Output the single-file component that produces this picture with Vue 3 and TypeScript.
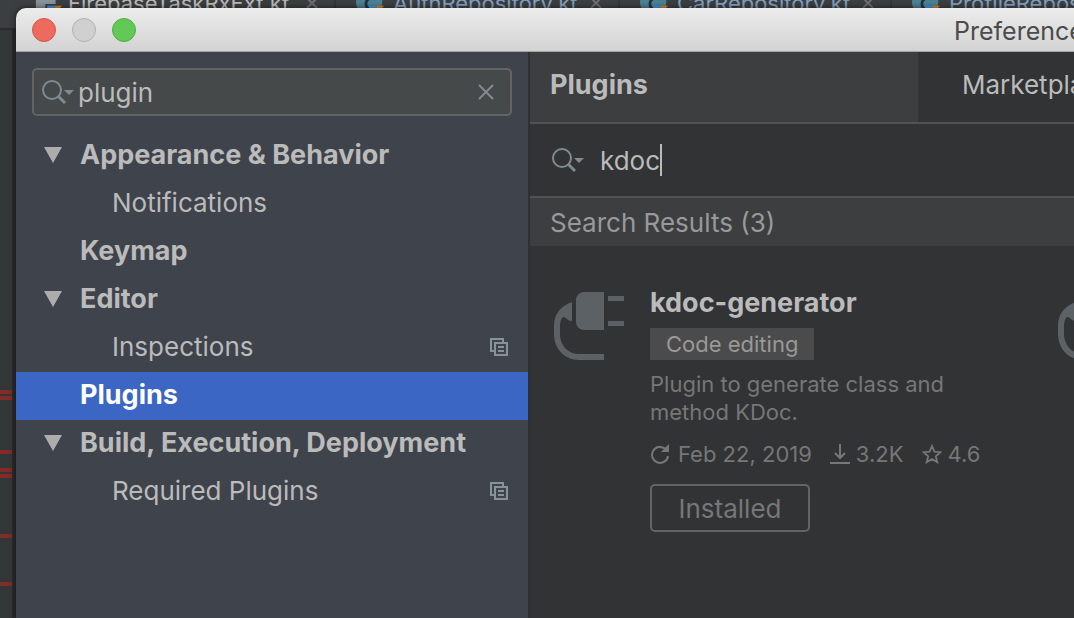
<script setup lang="ts">
import { ref } from 'vue'

interface EditorTab {
  name: string
  kind: 'file' | 'class'
  width: number
}

interface TreeItem {
  label: string
  level: 'group' | 'child'
  arrow?: boolean
  project?: boolean
}

const tabs: EditorTab[] = [
  { name: 'FirebaseTaskRxExt.kt', kind: 'file', width: 322 },
  { name: 'AuthRepository.kt', kind: 'class', width: 284 },
  { name: 'CarRepository.kt', kind: 'class', width: 272 },
  { name: 'ProfileRepository.kt', kind: 'class', width: 320 },
]

const errorMarks: number[] = [360, 366, 420, 438, 444, 504, 552]

const tree: TreeItem[] = [
  { label: 'Appearance & Behavior', level: 'group', arrow: true },
  { label: 'Notifications', level: 'child' },
  { label: 'Keymap', level: 'group' },
  { label: 'Editor', level: 'group', arrow: true },
  { label: 'Inspections', level: 'child', project: true },
  { label: 'Plugins', level: 'group' },
  { label: 'Build, Execution, Deployment', level: 'group', arrow: true },
  { label: 'Required Plugins', level: 'child', project: true },
]

const settingsQuery = ref('plugin')
const pluginQuery = ref('kdoc')
const selected = ref('Plugins')
</script>

<template>
  <div class="desktop">
    <div class="editor-tabs">
      <div v-for="tab in tabs" :key="tab.name" class="editor-tab" :class="tab.kind" :style="{ width: tab.width + 'px' }">
        <svg class="tab-icon" viewBox="0 0 32 32" aria-hidden="true">
          <path v-if="tab.kind === 'file'" fill="#87939a" d="M2 2h21v15H12v13H2z" />
          <template v-else>
            <circle cx="14" cy="15" r="14" fill="#4b8193" />
            <path d="M21 12a6 6 0 1 0-8 10" fill="none" stroke="#263238" stroke-width="3" />
          </template>
          <path fill="#3d9ae8" d="M14 19h9l-9 11z" />
          <path fill="#d9822b" d="M23 19h7L18 32h-4v-2z" />
        </svg>
        <span class="tab-name">{{ tab.name }}</span>
        <svg class="tab-close" viewBox="0 0 12 12" aria-hidden="true">
          <path d="M1 1l10 10M11 1L1 11" stroke="#6e7072" stroke-width="2" />
        </svg>
      </div>
    </div>
    <div class="gutter">
      <i v-for="mark in errorMarks" :key="mark" class="error-mark" :style="{ top: mark + 'px' }"></i>
    </div>

    <div class="window">
      <header class="titlebar">
        <div class="lights">
          <button type="button" class="light close" aria-label="Close"></button>
          <button type="button" class="light minimize" aria-label="Minimize" disabled></button>
          <button type="button" class="light zoom" aria-label="Zoom"></button>
        </div>
        <span class="window-title">Preferences</span>
      </header>

      <div class="body">
        <aside class="sidebar">
          <label class="settings-search">
            <svg class="search-icon" viewBox="0 0 32 26" aria-hidden="true">
              <circle cx="10" cy="11" r="9" fill="none" stroke="#7f8b91" stroke-width="2" />
              <path d="M16 17l7 7" stroke="#7f8b91" stroke-width="3" />
              <path d="M22 11h10l-5 5z" fill="#7f8b91" />
            </svg>
            <input v-model="settingsQuery" class="settings-input" type="text" aria-label="Search settings" />
            <button type="button" class="clear" aria-label="Clear" @click="settingsQuery = ''">
              <svg viewBox="0 0 16 16" aria-hidden="true">
                <path d="M1 1l14 14M15 1L1 15" stroke="#7f8b91" stroke-width="2" />
              </svg>
            </button>
          </label>
          <nav class="tree">
            <button
              v-for="item in tree"
              :key="item.label"
              type="button"
              class="row"
              :class="[item.level, { selected: item.label === selected }]"
              @click="selected = item.label"
            >
              <span class="arrow-slot">
                <svg v-if="item.arrow" class="arrow" viewBox="0 0 18 16" aria-hidden="true">
                  <path d="M0 0h18L9 16z" fill="#adadad" />
                </svg>
              </span>
              <span class="row-label">{{ item.label }}</span>
              <svg v-if="item.project" class="project-icon" viewBox="0 0 18 18" aria-hidden="true">
                <path d="M4 13H1V1h12v3" fill="none" stroke="#87939a" stroke-width="2" />
                <path d="M5 5h12v12H5zM8 9h6M8 13h6" fill="none" stroke="#87939a" stroke-width="2" />
              </svg>
            </button>
          </nav>
        </aside>

        <main class="content">
          <div class="page-head">
            <h1 class="page-title">Plugins</h1>
            <button type="button" class="market-tab">Marketplace</button>
          </div>
          <label class="plugin-search">
            <svg class="search-icon" viewBox="0 0 32 26" aria-hidden="true">
              <circle cx="10" cy="11" r="9" fill="none" stroke="#7f8b91" stroke-width="2" />
              <path d="M16 17l7 7" stroke="#7f8b91" stroke-width="3" />
              <path d="M22 11h10l-5 5z" fill="#7f8b91" />
            </svg>
            <span class="caret-field">
              <input v-model="pluginQuery" class="plugin-input" type="text" aria-label="Search plugins" />
              <i class="caret"></i>
            </span>
          </label>
          <h2 class="results-head">Search Results (3)</h2>
          <div class="results">
            <article v-for="n in 2" :key="n" class="card">
              <svg class="plug" viewBox="0 0 72 70" aria-hidden="true">
                <path
                  d="M18 10C6 14 0 23 0 33V42C0 57 11 68 25 68H50V62H25C14 62 6 53 6 42V36C6 30 7 25 10 25C12 25 13 29 18 29Z"
                  fill="#5b6165"
                />
                <path d="M50 0H30a8 8 0 0 0-8 8V30a8 8 0 0 0 8 8H50zM54 4h16v5H54zM54 29h16v5H54z" fill="#5b6165" />
              </svg>
              <div v-if="n === 1" class="info">
                <h3 class="plugin-name">kdoc-generator</h3>
                <span class="tag">Code editing</span>
                <p class="description">Plugin to generate class and method KDoc.</p>
                <div class="stats">
                  <span class="stat date">
                    <svg class="stat-icon" viewBox="0 0 20 20" aria-hidden="true">
                      <path d="M15 4.600A8 8 0 1 0 18 12" fill="none" stroke="#777" stroke-width="2" />
                      <path d="M19 0v8h-8z" fill="#777" />
                    </svg>
                    Feb 22, 2019
                  </span>
                  <span class="stat">
                    <svg class="stat-icon" viewBox="0 0 20 20" aria-hidden="true">
                      <path d="M10 0v14M5 9l5 5l5-5M0 19h20" fill="none" stroke="#777" stroke-width="2" />
                    </svg>
                    3.2K
                  </span>
                  <span class="stat">
                    <svg class="stat-icon" viewBox="0 0 20 20" aria-hidden="true">
                      <path
                        d="M10 2l2.400 5.700l6.100.500l-4.700 4l1.500 6L10 15l-5.300 3.200l1.500-6l-4.700-4l6.100-.500z"
                        fill="none"
                        stroke="#777"
                        stroke-width="1.800"
                      />
                    </svg>
                    4.6
                  </span>
                </div>
                <button type="button" class="installed" disabled>Installed</button>
              </div>
            </article>
          </div>
        </main>
      </div>
    </div>
  </div>
</template>

<style>
body {
  margin: 0;
  overflow: hidden;
}
</style>

<style scoped>
* {
  box-sizing: border-box;
}
.desktop {
  position: relative;
  min-height: 100vh;
  overflow: hidden;
  background: #2b2b2b;
  color: #bbbbbb;
  font-family: Inter, 'Liberation Sans', sans-serif;
  font-size: 26px;
  line-height: 32px;
}
button,
input {
  margin: 0;
  padding: 0;
  border: 0;
  background: none;
  color: inherit;
  font: inherit;
  outline: none;
}
h1,
h2,
h3,
p {
  margin: 0;
}
svg {
  display: block;
  flex: none;
}
.editor-tabs {
  display: flex;
  height: 30px;
  padding-left: 14px;
  border-bottom: 2px solid #2b2b2b;
  background: #3c3f41;
  overflow: hidden;
}
.editor-tab {
  display: flex;
  flex: none;
  align-items: center;
  height: 28px;
  margin-top: -11px;
  padding: 0 16px 0 20px;
  border-right: 2px solid #333638;
  font-size: 22px;
  white-space: nowrap;
}
.tab-icon {
  width: 30px;
  height: 30px;
  margin-right: 4px;
}
.editor-tab.class {
  color: #84a0bf;
}
.class .tab-icon {
  margin-right: 7px;
}
.tab-name {
  flex: 1;
}
.tab-close {
  width: 12px;
  height: 12px;
}
.gutter {
  position: absolute;
  left: 0;
  top: 30px;
  bottom: 0;
  width: 12px;
  background: #343738;
}
.error-mark {
  position: absolute;
  left: 0;
  width: 12px;
  height: 4px;
  background: #832b27;
}
.window {
  position: absolute;
  inset: 8px 0 0 16px;
  display: flex;
  flex-direction: column;
  overflow: hidden;
  border-radius: 10px 0 0 0;
  box-shadow: 0 0 6px rgba(0, 0, 0, 0.6);
}
.titlebar {
  display: flex;
  flex: none;
  align-items: center;
  justify-content: space-between;
  height: 44px;
  padding: 1px 0 0 16px;
  border-bottom: 1px solid #a3a3a3;
  background: linear-gradient(#ececec, #d3d3d3);
  color: #4b4b4b;
}
.lights {
  display: flex;
  gap: 16px;
}
.light {
  width: 24px;
  height: 24px;
  border: 1px solid;
  border-radius: 50%;
}
.close {
  border-color: #d5554b;
  background: #ee6a5f;
}
.minimize {
  border-color: #b1b1b1;
  background: #d0d0d0;
}
.zoom {
  border-color: #4cae40;
  background: #62c956;
}
.window-title {
  flex: 0 0 120px;
  padding-top: 1px;
  overflow: hidden;
  font-size: 25px;
  white-space: nowrap;
}
.body {
  display: flex;
  flex: 1;
  min-height: 0;
}
.sidebar {
  flex: 0 0 512px;
  min-width: 0;
  background: #3f434c;
}
.settings-search {
  display: flex;
  align-items: center;
  height: 48px;
  margin: 16px;
  padding: 0 16px 0 8px;
  border: 2px solid #646464;
  border-radius: 5px;
  background: #45494a;
}
.search-icon {
  width: 32px;
  height: 26px;
}
.settings-input {
  flex: 1;
  min-width: 0;
  padding: 2px 0 0 4px;
}
.clear svg {
  width: 16px;
  height: 16px;
}
.tree {
  display: flex;
  flex-direction: column;
}
.row {
  display: flex;
  align-items: center;
  height: 48px;
  padding: 0 20px 2px 28px;
  text-align: left;
  white-space: nowrap;
}
.group {
  font-size: 27px;
  font-weight: 700;
}
.child {
  padding-left: 60px;
}
.selected {
  background: #3b66c4;
  color: #ffffff;
}
.arrow-slot {
  width: 36px;
}
.arrow {
  width: 18px;
  height: 16px;
}
.row-label {
  flex: 1;
}
.project-icon {
  width: 18px;
  height: 18px;
}
.content {
  flex: 1;
  min-width: 0;
  border-left: 2px solid #2f3031;
  background: #313335;
  overflow: hidden;
}
.page-head {
  display: flex;
  height: 72px;
  border-bottom: 2px solid #515253;
}
.page-title {
  flex: 1;
  padding: 17px 20px;
  background: #3c3e40;
  font-size: 27px;
}
.market-tab {
  flex: 0 0 156px;
  padding: 0 0 4px 44px;
  overflow: hidden;
  text-align: left;
}
.plugin-search {
  display: flex;
  align-items: center;
  height: 72px;
  padding-left: 22px;
}
.caret-field {
  display: flex;
  flex: 1;
  align-items: center;
  margin-left: 16px;
}
.plugin-input {
  width: 60px;
  padding-top: 2px;
}
.caret {
  width: 2px;
  height: 32px;
  background: #bbbbbb;
}
.results-head {
  height: 50px;
  padding: 9px 20px;
  border-top: 2px solid #515253;
  background: #3c3e40;
  color: #999999;
  font-size: 26px;
  font-weight: 400;
}
.results {
  display: flex;
  padding: 41px 24px;
}
.card {
  display: flex;
  flex: 0 0 504px;
  gap: 24px;
}
.plug {
  width: 72px;
  height: 70px;
  margin-top: 5px;
}
.info {
  display: flex;
  flex-direction: column;
  align-items: flex-start;
  width: 340px;
}
.plugin-name {
  font-size: 27px;
}
.tag {
  margin-top: 9px;
  padding: 0 16px;
  background: #4b4b4b;
  color: #999999;
  font-size: 22px;
}
.description {
  width: 300px;
  margin-top: 10px;
  color: #777777;
  font-size: 22px;
  line-height: 28px;
}
.stats {
  display: flex;
  gap: 18px;
  margin-top: 12px;
  color: #777777;
  font-size: 22px;
  white-space: nowrap;
}
.stat {
  display: flex;
  align-items: center;
  gap: 6px;
}
.date {
  gap: 8px;
}
.stat-icon {
  width: 20px;
  height: 20px;
}
.installed {
  width: 160px;
  height: 48px;
  margin-top: 14px;
  padding-top: 1px;
  border: 2px solid #646464;
  border-radius: 5px;
  color: #777777;
}
</style>
